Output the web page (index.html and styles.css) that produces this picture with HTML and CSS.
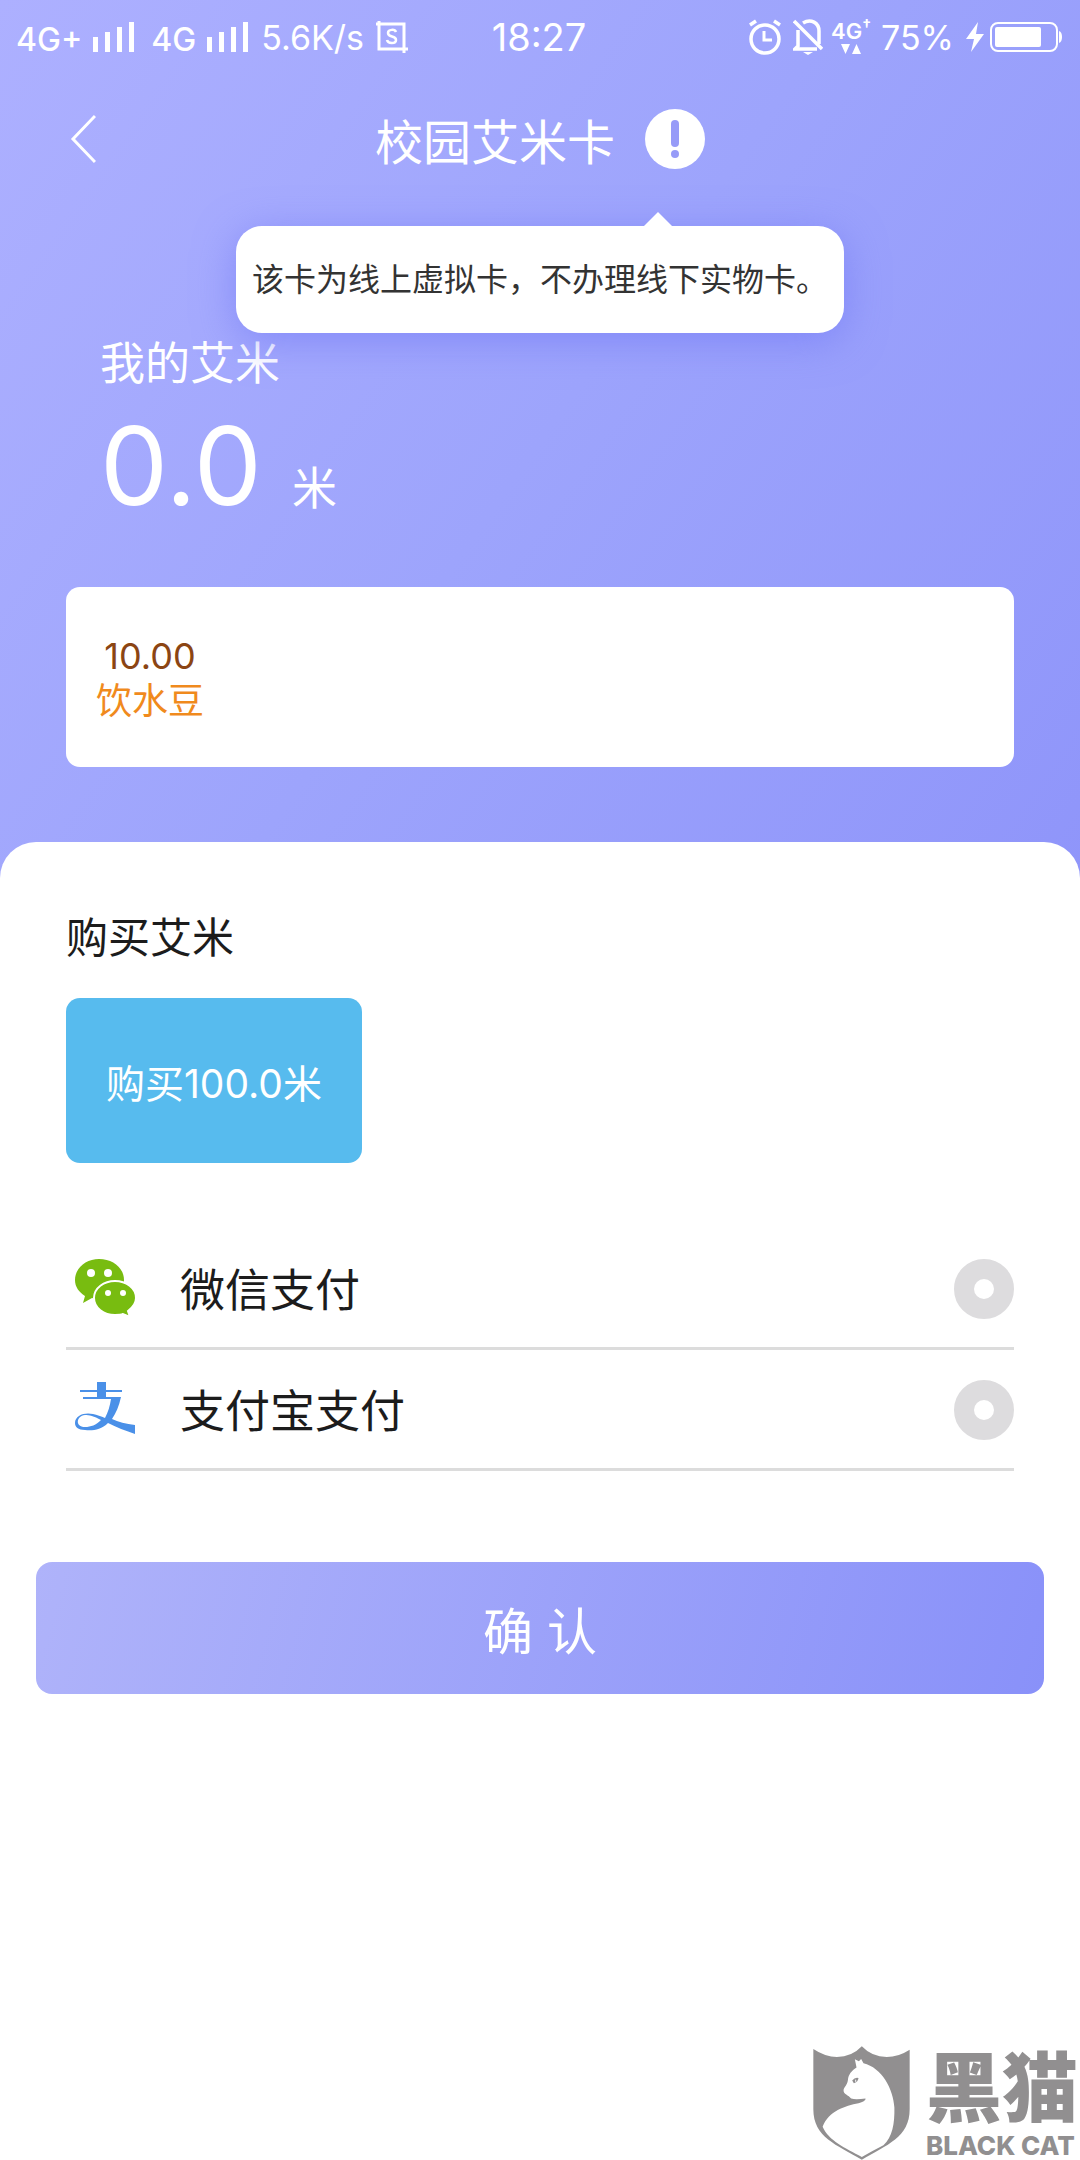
FILE: index.html
```html
<!DOCTYPE html>
<html lang="zh-CN">
  <head>
    <meta charset="UTF-8" />
    <meta name="viewport" content="width=device-width, initial-scale=1.0" />
    <title>校园艾米卡</title>
    <link rel="stylesheet" href="styles.css">
  </head>
  <body>
    <header class="hero">
      <!-- status bar -->
      <div class="status-bar">
        <div class="status-left">
          <span class="network">4G+</span>
          <svg class="signal" width="42" height="30" viewBox="0 0 42 30" fill="#fff">
            <path d="M0 15h5v15H0zM12 10h5v20h-5zM24 5h5v25h-5zM36 0h5v30h-5z" />
          </svg>
          <span class="network second">4G</span>
          <svg class="signal" width="42" height="30" viewBox="0 0 42 30" fill="#fff">
            <path d="M0 15h5v15H0zM12 10h5v20h-5zM24 5h5v25h-5zM36 0h5v30h-5z" />
          </svg>
          <span class="speed">5.6K/s</span>
          <svg class="shot" width="32" height="32" viewBox="0 0 32 32" fill="none" stroke="#fff" stroke-width="3">
            <path d="M3 0v28h29M0 3h28v29" />
            <path d="M20 11c-1-3-8-3-8 1 0 5 8 2 8 7 0 4-8 4-9 0" stroke-width="2.5" />
          </svg>
        </div>
        <time class="clock">18:27</time>
        <div class="status-right">
          <svg width="34" height="36" viewBox="0 0 34 36" fill="none" stroke="#fff" stroke-width="3.5">
            <circle cx="17" cy="20" r="14" />
            <path d="M16 12v9h8" stroke-width="3" />
            <path d="M2 6l6-4M32 6l-6-4" />
          </svg>
          <svg class="bell" width="30" height="36" viewBox="0 0 30 36" fill="none" stroke="#fff" stroke-width="3.500">
            <path d="M5 11v16l-3 3h22M10 4c8-5 16 0 16 8v13" />
            <path d="M1 2l28 28" />
            <path d="M10 33h10l-5 3z" fill="#fff" stroke="none" />
          </svg>
          <div class="data-state">
            <span>4G<sup>†</sup></span>
            <svg width="20" height="10" viewBox="0 0 20 10" fill="#fff">
              <path d="M0 0h9L4.500 10zM11 10h9L15.500 0z" />
            </svg>
          </div>
          <span class="battery-text">75%</span>
          <svg class="bolt" width="18" height="30" viewBox="0 0 18 30" fill="#fff">
            <path d="M12 0L0 17h8L5 30 18 12h-8z" />
          </svg>
          <svg width="72" height="30" viewBox="0 0 72 30">
            <rect x="1" y="1" width="66" height="28" rx="7" fill="none" stroke="#fff" stroke-width="2" />
            <rect x="5" y="5" width="46" height="20" rx="2" fill="#fff" />
            <path d="M69 9q3 1 3 6t-3 6z" fill="#fff" />
          </svg>
        </div>
      </div>

      <!-- title bar -->
      <div class="nav">
        <button class="back" type="button" aria-label="返回">
          <svg width="26" height="50" viewBox="0 0 26 50" fill="none" stroke="#fff" stroke-width="3">
            <path d="M25 2L3 25l22 23" />
          </svg>
        </button>
        <div class="nav-title">
          <h1>校园艾米卡</h1>
          <button class="info" type="button" aria-label="说明" aria-describedby="card_tip">
            <svg width="60" height="60" viewBox="0 0 60 60">
              <circle cx="30" cy="30" r="30" fill="#fff" />
              <rect x="26" y="11" width="8" height="27" rx="4" fill="#979bf8" />
              <circle cx="30" cy="45" r="4" fill="#979bf8" />
            </svg>
          </button>
          <div class="tip" id="card_tip" role="tooltip">该卡为线上虚拟卡，不办理线下实物卡。</div>
        </div>
      </div>

      <div class="balance">
        <div class="balance-label">我的艾米</div>
        <div class="balance-value">
          <span class="number">0.0</span>
          <span class="unit">米</span>
        </div>
      </div>

      <div class="bean-card">
        <div class="bean">
          <span class="bean-value">10.00</span>
          <span class="bean-name">饮水豆</span>
        </div>
      </div>
    </header>

    <main class="sheet">
      <h2>购买艾米</h2>
      <button class="package" type="button">购买100.0米</button>

      <form class="pay">
        <label class="pay-item">
          <svg class="pay-icon" width="60" height="60" viewBox="0 0 60 60">
            <path d="M24 0C11 0 0 9 0 21c0 7 4 12 10 16l-2 7 9-5c3 1 7 1 10 1 13 0 22-8 22-19C49 9 38 0 24 0z" fill="#78bc10" />
            <path d="M40 22c-11 0-21 7-21 17s10 17 21 17c3 0 6 0 8-1l7 3-2-6c4-3 8-7 8-13 0-10-10-17-21-17z" fill="#78bc10" stroke="#fff" stroke-width="2" />
            <g fill="#fff">
              <circle cx="16" cy="14" r="4" />
              <circle cx="33" cy="14" r="4" />
              <circle cx="33" cy="34" r="3" />
              <circle cx="48" cy="34" r="3" />
            </g>
          </svg>
          <span class="pay-name">微信支付</span>
          <input type="radio" name="pay" value="wechat" />
        </label>
        <label class="pay-item">
          <svg class="pay-icon" width="60" height="60" viewBox="0 0 60 60" fill="#4a90e8">
            <path d="M22 2h9v8h16v2H31v5h15C44 26 41 33 37 39c6 3 14 5 23 6v9c-9-3-19-7-27-11C26 50 17 51 10 50 3 50 0 47 0 43c0-8 10-11 18-9 4 1 8 2 12 4 3-6 5-12 6-19H8v-2h14v-5H5v-2h17zM26 40c-7-4-12-5-16-5-9 1-10 12 0 12 6 0 11-2 16-7z" />
          </svg>
          <span class="pay-name">支付宝支付</span>
          <input type="radio" name="pay" value="alipay" />
        </label>
        <button class="confirm" type="submit">确 认</button>
      </form>
    </main>

    <footer class="brand">
      <svg width="97" height="114" viewBox="63 75 292 343">
        <path d="M64 84Q100 108 135 108 180 108 210 76 240 108 285 108 320 108 354 86V265C354 350 285 372 210 417 135 372 64 350 64 265z" fill="#918f90" />
        <path d="M92 318C110 270 160 255 200 247 213 244 222 239 221 233 203 235 188 236 178 233 170 222 154 220 155 207 156 200 166 192 168 178 170 160 179 150 194 140L189 115 201 121 208 114 215 127C270 140 305 205 308 260 309 310 302 348 275 374Q240 392 210 409C160 382 110 360 92 318z" fill="#fff" />
        <path d="M181 179q8-11 19-8-2 13-14 16z" fill="#918f90" />
        <path d="M189 174l5 6-3 5z" fill="#fff" />
      </svg>
      <div class="brand-text">
        <strong>黑猫</strong>
        <span>BLACK CAT</span>
      </div>
    </footer>
  </body>
</html>
```

FILE: styles.css
```css
* {
  box-sizing: border-box;
}

body {
  margin: 0;
  min-height: 100vh;
  display: flex;
  flex-direction: column;
  background: #fff;
  color: #1c1c1c;
  font-family: Inter, "Noto Sans CJK SC", sans-serif;
}

h1,
h2 {
  margin: 0;
  font-weight: 400;
}

button {
  padding: 0;
  border: none;
  background: none;
  color: #fff;
  font-family: inherit;
  cursor: pointer;
}

svg {
  display: block;
  flex: none;
}

.hero {
  padding-bottom: 115px;
  color: #fff;
  background: linear-gradient(125deg, #adb0ff 0%, #9da4fc 50%, #8f95fa 100%);
}

/* status bar */
.status-bar {
  display: grid;
  grid-template-columns: 1fr auto 1fr;
  align-items: center;
  height: 74px;
  padding: 0 18px 0 16px;
}

.status-left,
.status-right {
  display: flex;
  align-items: center;
}

.status-right {
  justify-content: flex-end;
}

.network {
  margin-top: 4px;
  font-size: 32px;
  font-weight: 500;
}

.second {
  margin-left: 16px;
}

.signal {
  margin-left: 11px;
}

.speed {
  margin: 0 12px;
  font-size: 34px;
}

.clock {
  font-size: 38px;
}

.bell {
  margin-left: 11px;
}

.data-state {
  display: flex;
  flex-direction: column;
  align-items: center;
  gap: 3px;
  margin: 0 10px 0 8px;
  font-size: 22px;
  font-weight: 600;
  line-height: 20px;
}

.data-state sup {
  font-size: 16px;
  line-height: 0;
}

.battery-text {
  font-size: 34px;
}

.bolt {
  margin: 0 6px 0 12px;
}

/* title bar */
.nav {
  display: grid;
  grid-template-columns: 1fr auto 1fr;
  align-items: center;
  height: 130px;
  padding: 0 70px;
}

.back {
  justify-self: start;
}

.nav-title {
  position: relative;
  display: flex;
  align-items: center;
  gap: 30px;
}

.nav-title h1 {
  font-size: 48px;
}

.tip {
  position: absolute;
  top: 122px;
  left: 50%;
  transform: translateX(-50%);
  padding: 0 16px;
  border-radius: 26px;
  background: #fff;
  box-shadow: 0 8px 40px rgba(112, 118, 245, 0.6);
  color: #333;
  font-size: 32px;
  line-height: 107px;
  white-space: nowrap;
}

.tip::before {
  content: "";
  position: absolute;
  right: 172px;
  bottom: 100%;
  border: 14px solid transparent;
  border-top: none;
  border-bottom-color: #fff;
}

/* balance */
.balance {
  padding: 132px 100px 0;
}

.balance-label {
  font-size: 45px;
  line-height: 56px;
}

.balance-value {
  display: flex;
  align-items: baseline;
  gap: 30px;
  margin-top: 14px;
}

.number {
  font-size: 108px;
  line-height: 120px;
}

.unit {
  font-size: 45px;
  line-height: 56px;
}

.bean-card {
  display: flex;
  align-items: center;
  height: 180px;
  margin: 61px 66px 0;
  padding: 4px 30px 0;
  border-radius: 14px;
  background: #fff;
}

.bean {
  display: flex;
  flex-direction: column;
  align-items: center;
  font-size: 36px;
  line-height: 45px;
}

.bean-value {
  color: #8b4513;
}

.bean-name {
  color: #f08a1d;
}

/* purchase */
.sheet {
  margin-top: -40px;
  padding: 68px 66px 0;
  border-radius: 36px 36px 0 0;
  background: #fff;
}

.sheet h2 {
  font-size: 42px;
  line-height: 56px;
}

.package {
  display: block;
  height: 165px;
  margin-top: 32px;
  padding: 0 40px;
  border-radius: 14px;
  background: #57bbee;
  font-size: 39px;
}

.pay {
  margin-top: 66px;
}

.pay-item {
  display: flex;
  align-items: center;
  padding: 30px 0 28px;
  border-bottom: 3px solid #dcdcdc;
  cursor: pointer;
}

.pay-icon {
  margin: 0 45px 0 9px;
}

.pay-name {
  flex: 1;
  padding-top: 4px;
  font-size: 45px;
  line-height: 56px;
}

.pay-item input {
  appearance: none;
  width: 60px;
  height: 60px;
  margin: 0;
  border: 20px solid #dddcde;
  border-radius: 50%;
  background: #fff;
}

.pay-item input:checked {
  border-color: #9aa0fb;
}

.confirm {
  display: block;
  width: calc(100% + 60px);
  height: 132px;
  margin: 91px -30px 0;
  border-radius: 16px;
  background: linear-gradient(105deg, #afb3fa, #8991f9);
  font-size: 50px;
}

/* brand mark */
.brand {
  display: flex;
  align-items: flex-end;
  gap: 16px;
  margin: auto 0 0 auto;
  padding-right: 2px;
  color: #918f90;
}

.brand-text {
  display: flex;
  flex-direction: column;
}

.brand-text strong {
  font-size: 76px;
  font-weight: 900;
  line-height: 88px;
}

.brand-text span {
  font-size: 26px;
  font-weight: 800;
  line-height: 28px;
}
```
